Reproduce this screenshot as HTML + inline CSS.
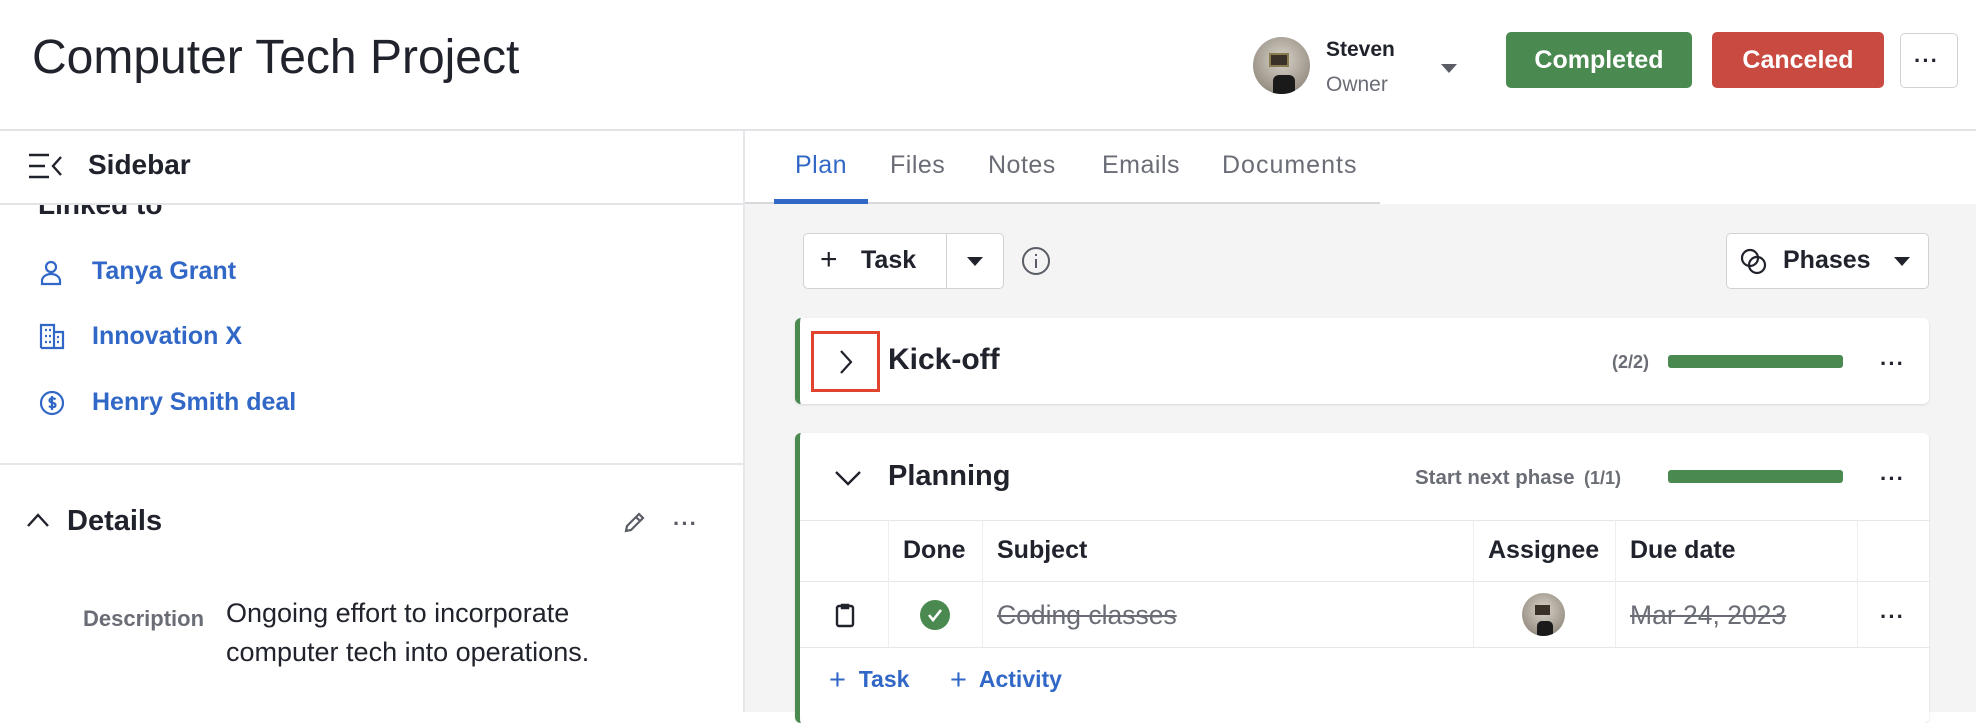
<!DOCTYPE html>
<html><head><meta charset="utf-8"><style>
*{box-sizing:border-box;margin:0;padding:0}
body{width:1976px;height:712px;overflow:hidden;background:#fff;font-family:"Liberation Sans",sans-serif;color:#21232c;position:relative}
.a{position:absolute;white-space:nowrap}
.b{font-weight:bold}
.blue{color:#3167c6}
.grey{color:#6a6d75}
.dots{position:absolute;font-weight:bold;font-size:22px;letter-spacing:1px;color:#21232c}
</style></head><body>
<div class="a" style="left:32px;top:30px;font-size:48px">Computer Tech Project</div>
<div class="a" style="left:1253px;top:37px;width:57px;height:57px;border-radius:50%;background:radial-gradient(circle at 50% 40%,#d8d2c8,#9b9388 70%,#5a544d);overflow:hidden">
 <div style="position:absolute;left:16px;top:16px;width:20px;height:14px;background:#3a3228;border:2px solid #8a7a50"></div>
 <div style="position:absolute;left:20px;top:38px;width:22px;height:20px;background:#1a1a1a;border-radius:6px 6px 0 0"></div>
</div>
<div class="a b" style="left:1326px;top:38px;font-size:21px">Steven</div>
<div class="a grey" style="left:1326px;top:73px;font-size:21px">Owner</div>
<div class="a" style="left:1441px;top:64px;border-left:8px solid transparent;border-right:8px solid transparent;border-top:9px solid #5a5d66"></div>
<div class="a b" style="left:1506px;top:32px;width:186px;height:56px;background:#4a8a50;border-radius:5px;color:#fff;font-size:25px;line-height:56px;text-align:center">Completed</div>
<div class="a b" style="left:1712px;top:32px;width:172px;height:56px;background:#c94a40;border-radius:5px;color:#fff;font-size:25px;line-height:56px;text-align:center">Canceled</div>
<div class="a" style="left:1900px;top:33px;width:58px;height:55px;border:1px solid #d0d2d6;border-radius:5px"></div>
<div class="dots" style="left:1914px;top:48px;font-size:22px">···</div>
<div class="a" style="left:0;top:129px;width:1976px;height:2px;background:#e2e3e6"></div>
<div class="a" style="left:0;top:203px;width:744px;height:2px;background:#e2e3e6"></div>
<div class="a" style="left:743px;top:130px;width:2px;height:582px;background:#e6e7ea"></div>
<svg class="a" style="left:29px;top:153px" width="34" height="26" viewBox="0 0 34 26" fill="none" stroke="#21232c" stroke-width="2.4"><path d="M0 2h20M0 13h16M0 24h20M32 4l-8 9 8 9"/></svg>
<div class="a b" style="left:88px;top:149px;font-size:28px">Sidebar</div>
<div class="a b" style="left:38px;top:189px;font-size:28px;clip-path:inset(16px 0 0 0)">Linked to</div>
<svg class="a" style="left:40px;top:260px" width="22" height="26" viewBox="0 0 22 26" fill="none" stroke="#3167c6" stroke-width="2.2"><circle cx="11" cy="7" r="5"/><path d="M2 24v-3a9 7 0 0118 0v3z"/></svg>
<div class="a b blue" style="left:92px;top:257px;font-size:25px">Tanya Grant</div>
<svg class="a" style="left:39px;top:323px" width="26" height="27" viewBox="0 0 26 27" fill="none" stroke="#3167c6" stroke-width="2.2"><path d="M2 25V2h13v23M15 9h9v16H2M6 7h2M10 7h2M6 13h2M10 13h2M6 19h2M10 19h2M18 14h2M18 19h2"/></svg>
<div class="a b blue" style="left:92px;top:322px;font-size:25px">Innovation X</div>
<svg class="a" style="left:39px;top:390px" width="26" height="26" viewBox="0 0 26 26" fill="none" stroke="#3167c6" stroke-width="2.2"><circle cx="13" cy="13" r="11"/><path d="M16.5 9.5c-1-1.5-6-2-6 1s6 1.5 6 4.5-5 2.5-6.5 1M13 6v14"/></svg>
<div class="a b blue" style="left:92px;top:388px;font-size:25px">Henry Smith deal</div>
<div class="a" style="left:0;top:463px;width:744px;height:2px;background:#e6e7ea"></div>
<svg class="a" style="left:26px;top:512px" width="24" height="16" viewBox="0 0 24 16" fill="none" stroke="#21232c" stroke-width="2.4"><path d="M2 14L12 3l10 11"/></svg>
<div class="a b" style="left:67px;top:505px;font-size:29px">Details</div>
<svg class="a" style="left:623px;top:510px" width="24" height="24" viewBox="0 0 24 24" fill="none" stroke="#5a5d66" stroke-width="2.2"><path d="M3 21l1-5L16 4l4 4L8 20zM13 7l4 4"/></svg>
<div class="dots" style="left:673px;top:511px;font-size:22px;color:#5a5d66">···</div>
<div class="a grey b" style="left:83px;top:606px;font-size:22px">Description</div>
<div class="a" style="left:226px;top:594px;font-size:27px;line-height:39px">Ongoing effort to incorporate<br>computer tech into operations.</div>
<div class="a" style="left:745px;top:204px;width:1231px;height:508px;background:#f4f4f4"></div>
<div class="a" style="left:745px;top:202px;width:635px;height:2px;background:#d8d9dc"></div>
<div class="a blue" style="left:795px;top:151px;font-size:25px;letter-spacing:.5px">Plan</div>
<div class="a" style="left:774px;top:199px;width:94px;height:5px;background:#3167c6"></div>
<div class="a grey" style="left:890px;top:151px;font-size:25px;letter-spacing:.5px">Files</div>
<div class="a grey" style="left:988px;top:151px;font-size:25px;letter-spacing:.5px">Notes</div>
<div class="a grey" style="left:1102px;top:151px;font-size:25px;letter-spacing:.5px">Emails</div>
<div class="a grey" style="left:1222px;top:151px;font-size:25px;letter-spacing:1px">Documents</div>
<div class="a" style="left:803px;top:233px;width:201px;height:56px;background:#fff;border:1px solid #d0d2d6;border-radius:5px"></div>
<div class="a" style="left:946px;top:233px;width:1px;height:56px;background:#d0d2d6"></div>
<div class="a" style="left:820px;top:243px;font-size:30px">+</div>
<div class="a b" style="left:861px;top:246px;font-size:25px">Task</div>
<div class="a" style="left:967px;top:257px;border-left:8px solid transparent;border-right:8px solid transparent;border-top:9px solid #21232c"></div>
<svg class="a" style="left:1021px;top:246px" width="30" height="30" viewBox="0 0 30 30" fill="none" stroke="#5a5d66" stroke-width="2"><circle cx="15" cy="15" r="13"/><path d="M15 13v9M15 8v2"/></svg>
<div class="a" style="left:1726px;top:233px;width:203px;height:56px;background:#fff;border:1px solid #d0d2d6;border-radius:5px"></div>
<svg class="a" style="left:1740px;top:247px" width="30" height="30" viewBox="0 0 30 30" fill="none" stroke="#21232c" stroke-width="2.2"><circle cx="10" cy="11" r="8"/><circle cx="17" cy="18" r="8"/></svg>
<div class="a b" style="left:1783px;top:246px;font-size:25px">Phases</div>
<div class="a" style="left:1894px;top:257px;border-left:8px solid transparent;border-right:8px solid transparent;border-top:9px solid #21232c"></div>
<div class="a" style="left:795px;top:318px;width:1134px;height:86px;background:#fff;border-radius:6px;border-left:5px solid #4a8a50;box-shadow:0 1px 2px rgba(0,0,0,.12)"></div>
<div class="a" style="left:811px;top:331px;width:69px;height:61px;border:3px solid #e0442e"></div>
<svg class="a" style="left:838px;top:349px" width="16" height="26" viewBox="0 0 16 26" fill="none" stroke="#21232c" stroke-width="2.2"><path d="M3 2l10 11L3 24"/></svg>
<div class="a b" style="left:888px;top:343px;font-size:30px">Kick-off</div>
<div class="a b grey" style="left:1612px;top:352px;font-size:18px">(2/2)</div>
<div class="a" style="left:1668px;top:355px;width:175px;height:13px;background:#4a8a50;border-radius:3px"></div>
<div class="dots" style="left:1880px;top:351px;font-size:22px">···</div>
<div class="a" style="left:795px;top:433px;width:1134px;height:290px;background:#fff;border-radius:6px;border-left:5px solid #4a8a50;box-shadow:0 1px 2px rgba(0,0,0,.12)"></div>
<svg class="a" style="left:834px;top:469px" width="28" height="18" viewBox="0 0 28 18" fill="none" stroke="#21232c" stroke-width="2.4"><path d="M2 3l12 12L26 3"/></svg>
<div class="a b" style="left:888px;top:460px;font-size:29px">Planning</div>
<div class="a b grey" style="left:1415px;top:466px;font-size:20.5px">Start next phase</div>
<div class="a b grey" style="left:1584px;top:468px;font-size:18px">(1/1)</div>
<div class="a" style="left:1668px;top:470px;width:175px;height:13px;background:#4a8a50;border-radius:3px"></div>
<div class="dots" style="left:1880px;top:466px;font-size:22px">···</div>
<div class="a" style="left:800px;top:520px;width:1129px;height:1px;background:#e6e7ea"></div>
<div class="a" style="left:800px;top:581px;width:1129px;height:1px;background:#e6e7ea"></div>
<div class="a" style="left:800px;top:647px;width:1129px;height:1px;background:#e6e7ea"></div>
<div class="a" style="left:888px;top:520px;width:1px;height:127px;background:#eceef0"></div>
<div class="a" style="left:982px;top:520px;width:1px;height:127px;background:#eceef0"></div>
<div class="a" style="left:1473px;top:520px;width:1px;height:127px;background:#eceef0"></div>
<div class="a" style="left:1615px;top:520px;width:1px;height:127px;background:#eceef0"></div>
<div class="a" style="left:1857px;top:520px;width:1px;height:127px;background:#eceef0"></div>
<div class="a b" style="left:903px;top:536px;font-size:25px">Done</div>
<div class="a b" style="left:997px;top:536px;font-size:25px">Subject</div>
<div class="a b" style="left:1488px;top:536px;font-size:25px">Assignee</div>
<div class="a b" style="left:1630px;top:536px;font-size:25px">Due date</div>
<svg class="a" style="left:835px;top:602px" width="20" height="26" viewBox="0 0 20 26" fill="none" stroke="#21232c" stroke-width="2.4"><rect x="2" y="4" width="16" height="20" rx="2"/><path d="M7 3h6v3H7z" fill="#21232c"/></svg>
<svg class="a" style="left:920px;top:600px" width="30" height="30" viewBox="0 0 30 30"><circle cx="15" cy="15" r="15" fill="#4a8a50"/><path d="M9 15l4 5 8-10" fill="none" stroke="#fff" stroke-width="2.6"/></svg>
<div class="a grey" style="left:997px;top:600px;font-size:26.5px;text-decoration:line-through">Coding classes</div>
<div class="a" style="left:1522px;top:593px;width:43px;height:43px;border-radius:50%;background:radial-gradient(circle at 50% 40%,#d8d2c8,#9b9388 70%,#5a544d);overflow:hidden">
 <div style="position:absolute;left:13px;top:12px;width:15px;height:10px;background:#3a3228"></div>
 <div style="position:absolute;left:15px;top:28px;width:16px;height:16px;background:#1a1a1a;border-radius:5px 5px 0 0"></div>
</div>
<div class="a grey" style="left:1630px;top:600px;font-size:26.5px;text-decoration:line-through">Mar 24, 2023</div>
<div class="dots" style="left:1880px;top:604px;font-size:22px">···</div>
<div class="a b blue" style="left:829px;top:664px;font-size:23px"><span style="font-size:29px;font-weight:normal;vertical-align:-2px">+</span>&nbsp; Task</div>
<div class="a b blue" style="left:950px;top:664px;font-size:23px"><span style="font-size:29px;font-weight:normal;vertical-align:-2px">+</span>&nbsp; Activity</div>
</body></html>
